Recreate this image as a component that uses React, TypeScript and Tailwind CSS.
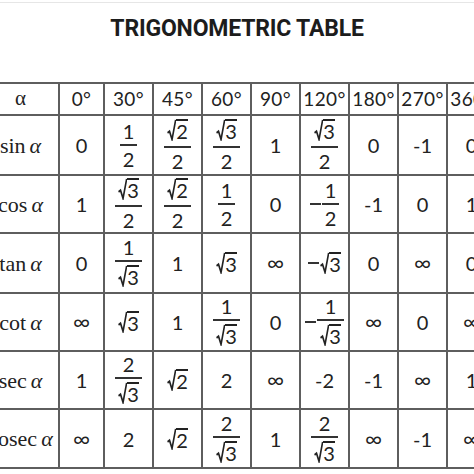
import React from "react";

const num = { fontFamily: "Lato, 'Open Sans', sans-serif" };
const serif = { fontFamily: "'Liberation Serif', 'DejaVu Serif', serif" };

const degrees = ["0°", "30°", "45°", "60°", "90°", "120°", "180°", "270°", "360°"];

const rows: [string, string[]][] = [
  ["sin", ["0", "1/2", "r2/2", "r3/2", "1", "r3/2", "0", "-1", "0"]],
  ["cos", ["1", "r3/2", "r2/2", "1/2", "0", "m1/2", "-1", "0", "1"]],
  ["tan", ["0", "1/r3", "1", "r3", "inf", "mr3", "0", "inf", "0"]],
  ["cot", ["inf", "r3", "1", "1/r3", "0", "m1/r3", "inf", "0", "inf"]],
  ["sec", ["1", "2/r3", "r2", "2", "inf", "-2", "-1", "inf", "1"]],
  ["cosec", ["inf", "2", "r2", "2/r3", "1", "2/r3", "inf", "-1", "inf"]],
];

const Sqrt = ({ n }: { n: string }) => (
  <span className="inline-flex items-stretch leading-none">
    <svg viewBox="0 0 10 20" preserveAspectRatio="none" className="w-[9px] h-auto self-stretch">
      <path d="M0.6 12.6 L2.8 11.2 L5.6 18.6 L9.6 0.9" stroke="currentColor" strokeWidth="1.8" fill="none" strokeLinejoin="miter" />
    </svg>
    <span className="border-t-[2px] border-current">{n}</span>
  </span>
);

const Part = ({ p }: { p: string }) => {
  if (p === "inf")
    return (
      <span className="text-[25px] leading-[20px]" style={{ fontFamily: "'Open Sans', Lato, sans-serif" }}>
        ∞
      </span>
    );
  if (p.startsWith("r")) return <Sqrt n={p.slice(1)} />;
  return <span>{p}</span>;
};

const Value = ({ v }: { v: string }) => {
  const neg = v.startsWith("m");
  const body = neg ? v.slice(1) : v;
  const parts = body.split("/");
  return (
    <span className="inline-flex items-center text-[20px] leading-none text-[#222]" style={num}>
      {neg && <span className="w-[11px] h-[2px] bg-[#333] mr-[1px]" />}
      {parts.length === 2 ? (
        <span className="inline-flex flex-col items-center">
          <span className="px-[3px] leading-none">
            <Part p={parts[0]} />
          </span>
          <span className="h-[2px] w-full bg-[#333] my-[3px]" />
          <span className="px-[3px] leading-none">
            <Part p={parts[1]} />
          </span>
        </span>
      ) : (
        <Part p={body} />
      )}
    </span>
  );
};

export default function App() {
  return (
    <div className="w-[474px] h-[474px] overflow-hidden bg-white">
      <div className="h-px mt-[2px] bg-[#e6e6e6]" />
      <h1
        className="mt-[14px] text-center text-[23px] leading-none font-bold text-[#1c1c1c] tracking-[-0.2px]"
        style={{ fontFamily: "Roboto, 'Liberation Sans', sans-serif" }}
      >
        TRIGONOMETRIC TABLE
      </h1>
      <div className="mt-[42px] ml-[-19px] w-max grid grid-cols-[75px_43px_47px_47px_47px_47px_47px_47px_47px_47px] grid-rows-[30px_58px_56px_58px_56px_56px_57px] gap-[2px] p-[2px] bg-[#5e5e5e]">
        <div className="bg-white flex items-center justify-center text-[21px] text-[#222]" style={serif}>
          α
        </div>
        {degrees.map((d) => (
          <div
            key={d}
            className="bg-white flex items-center justify-center text-[19px] tracking-[0.4px] text-[#222]"
            style={num}
          >
            {d}
          </div>
        ))}
        {rows.map(([name, vals]) => (
          <React.Fragment key={name}>
            <div className="bg-white flex items-center justify-center text-[22px] text-[#222]" style={serif}>
              {name}
              <span className="ml-[4px] italic">α</span>
            </div>
            {vals.map((v, i) => (
              <div key={i} className="bg-white flex items-center justify-center">
                <Value v={v} />
              </div>
            ))}
          </React.Fragment>
        ))}
      </div>
    </div>
  );
}
